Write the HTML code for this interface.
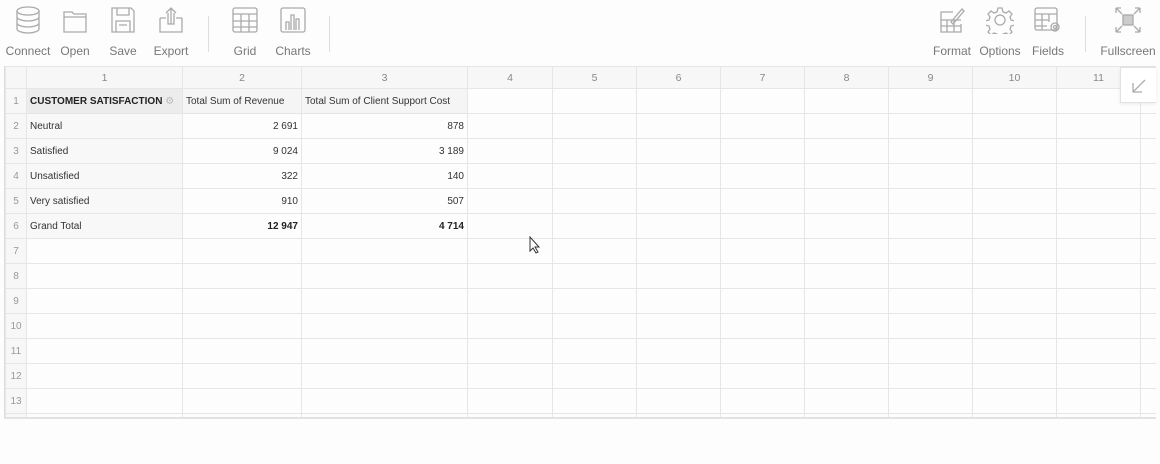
<!DOCTYPE html>
<html><head><meta charset="utf-8"><style>
body{margin:0;width:1160px;height:464px;background:#fdfdfd;font-family:"Liberation Sans",Arial,sans-serif;position:relative;overflow:hidden}
.tb{position:absolute;top:0;text-align:center;font-size:12px;color:#777}
.tb svg{display:block;margin:6px auto 0}
.tb span{position:absolute;top:44px;left:50%;transform:translateX(-50%);white-space:nowrap}
.sep{position:absolute;top:16px;width:1px;height:36px;background:#ddd}
.grid{position:absolute;left:4px;top:66px;width:1152px;height:353px;overflow:hidden;border-left:1px solid #ddd;border-bottom:2px solid #e2e2e2;box-sizing:border-box}
table{border-collapse:collapse;table-layout:fixed;width:1170px;font-size:10px;color:#333}
td{border:1px solid #e6e6e6;height:25px;padding:0 3px;white-space:nowrap;overflow:hidden;box-sizing:border-box}
tr.h td{height:22px;background:#f7f7f7;color:#888;text-align:center;font-size:10.5px}
td.n{background:#f7f7f7;color:#999;text-align:center;padding:0}
td.g{background:#f8f8f8}
td.m{background:#f5f5f5}
td.r{text-align:right}
b{font-weight:bold;color:#222}
.st{stroke:#aaa;fill:none;stroke-width:1.3}
</style></head><body>
<div class="tb" style="left:4px;width:48px"><svg width="26" height="28" viewBox="0 0 26 28" class="st"><ellipse cx="13" cy="5" rx="11" ry="4"/><path d="M2 5v18c0 2 5 4 11 4s11-2 11-4V5M2 11c0 2 5 4 11 4s11-2 11-4M2 17c0 2 5 4 11 4s11-2 11-4"/></svg><span>Connect</span></div>
<div class="tb" style="left:58px;width:34px"><svg width="26" height="28" viewBox="0 0 26 28" class="st"><path d="M2 6h8l2 2h12v18H2z M2 11h22"/></svg><span>Open</span></div>
<div class="tb" style="left:106px;width:34px"><svg width="26" height="28" viewBox="0 0 26 28" class="st"><path d="M2 2h19l3 3v21H2z M7 2v7h12V2 M6 15h14v11H6z M9 19h8"/></svg><span>Save</span></div>
<div class="tb" style="left:152px;width:38px"><svg width="26" height="28" viewBox="0 0 26 28" class="st"><path d="M2 12h6M18 12h6M2 12v14h22V12M13 2v16M8 7l5-5 5 5M10 7v11h6V7"/></svg><span>Export</span></div>
<div class="sep" style="left:208px"></div>
<div class="tb" style="left:228px;width:34px"><svg width="26" height="28" viewBox="0 0 26 28" class="st"><rect x="1" y="2" width="24" height="24" rx="2"/><path d="M1 8h24M1 15h24M1 21h24M9 8v18M17 8v18"/></svg><span>Grid</span></div>
<div class="tb" style="left:276px;width:34px"><svg width="26" height="28" viewBox="0 0 26 28" class="st"><rect x="1" y="2" width="24" height="24" rx="2"/><path d="M6 24v-8h3v8M11 24V9h3v15M16 24v-11h3v11"/></svg><span>Charts</span></div>
<div class="sep" style="left:329px"></div>
<div class="tb" style="left:934px;width:36px"><svg width="26" height="28" viewBox="0 0 26 28" class="st"><path d="M14 6H2v20h20v-8M2 14h20M2 20h20M8 14v12M15 14v12M12 16l11-13 2 2-11 13z"/></svg><span>Format</span></div>
<div class="tb" style="left:980px;width:40px"><svg width="28" height="28" viewBox="0 0 28 28" class="st"><path d="M12 2h4l1 4 3 1 3-2 3 3-2 3 1 3 4 1v4l-4 1-1 3 2 3-3 3-3-2-3 1-1 4h-4l-1-4-3-1-3 2-3-3 2-3-1-3-4-1v-4l4-1 1-3-2-3 3-3 3 2 3-1z"/><circle cx="14" cy="14" r="5"/></svg><span>Options</span></div>
<div class="tb" style="left:1032px;width:32px"><svg width="28" height="28" viewBox="0 0 28 28" class="st"><rect x="1" y="2" width="22" height="22" rx="2"/><path d="M1 8h22M1 14h14M1 20h12M8 8v16M15 8v8"/><circle cx="21" cy="21" r="4"/><circle cx="21" cy="21" r="1.5"/></svg><span>Fields</span></div>
<div class="sep" style="left:1085px"></div>
<div class="tb" style="left:1100px;width:56px"><svg width="28" height="28" viewBox="0 0 28 28" class="st"><rect x="9" y="9" width="10" height="10" fill="#ccc"/><path d="M2 2l6 6M2 2h5M2 2v5M26 2l-6 6M26 2h-5M26 2v5M2 26l6-6M2 26h5M2 26v-5M26 26l-6-6M26 26h-5M26 26v-5"/></svg><span>Fullscreen</span></div>

<div class="grid"><table>
<colgroup><col style="width:21px"><col style="width:156px"><col style="width:119px"><col style="width:166px"><col style="width:85px"><col style="width:84px"><col style="width:84px"><col style="width:84px"><col style="width:84px"><col style="width:84px"><col style="width:84px"><col style="width:84px"><col style="width:35px"></colgroup>
<tr class="h"><td></td><td>1</td><td>2</td><td>3</td><td>4</td><td>5</td><td>6</td><td>7</td><td>8</td><td>9</td><td>10</td><td>11</td><td></td></tr>
<tr><td class="n">1</td><td style="background:#ececec"><b>CUSTOMER SATISFACTION</b> <span style="color:#bbb">⚙</span></td><td class="m">Total Sum of Revenue</td><td class="m">Total Sum of Client Support Cost</td><td></td><td></td><td></td><td></td><td></td><td></td><td></td><td></td><td></td></tr>
<tr><td class="n">2</td><td class="g">Neutral</td><td class="r">2 691</td><td class="r">878</td><td></td><td></td><td></td><td></td><td></td><td></td><td></td><td></td><td></td></tr>
<tr><td class="n">3</td><td class="g">Satisfied</td><td class="r">9 024</td><td class="r">3 189</td><td></td><td></td><td></td><td></td><td></td><td></td><td></td><td></td><td></td></tr>
<tr><td class="n">4</td><td class="g">Unsatisfied</td><td class="r">322</td><td class="r">140</td><td></td><td></td><td></td><td></td><td></td><td></td><td></td><td></td><td></td></tr>
<tr><td class="n">5</td><td class="g">Very satisfied</td><td class="r">910</td><td class="r">507</td><td></td><td></td><td></td><td></td><td></td><td></td><td></td><td></td><td></td></tr>
<tr><td class="n">6</td><td class="g">Grand Total</td><td class="r"><b>12 947</b></td><td class="r"><b>4 714</b></td><td></td><td></td><td></td><td></td><td></td><td></td><td></td><td></td><td></td></tr>
<tr><td class="n">7</td><td></td><td></td><td></td><td></td><td></td><td></td><td></td><td></td><td></td><td></td><td></td><td></td></tr>
<tr><td class="n">8</td><td></td><td></td><td></td><td></td><td></td><td></td><td></td><td></td><td></td><td></td><td></td><td></td></tr>
<tr><td class="n">9</td><td></td><td></td><td></td><td></td><td></td><td></td><td></td><td></td><td></td><td></td><td></td><td></td></tr>
<tr><td class="n">10</td><td></td><td></td><td></td><td></td><td></td><td></td><td></td><td></td><td></td><td></td><td></td><td></td></tr>
<tr><td class="n">11</td><td></td><td></td><td></td><td></td><td></td><td></td><td></td><td></td><td></td><td></td><td></td><td></td></tr>
<tr><td class="n">12</td><td></td><td></td><td></td><td></td><td></td><td></td><td></td><td></td><td></td><td></td><td></td><td></td></tr>
<tr><td class="n">13</td><td></td><td></td><td></td><td></td><td></td><td></td><td></td><td></td><td></td><td></td><td></td><td></td></tr>
<tr><td class="n">14</td><td></td><td></td><td></td><td></td><td></td><td></td><td></td><td></td><td></td><td></td><td></td><td></td></tr>
</table></div>
<div style="position:absolute;left:1120px;top:67px;width:36px;height:36px;background:#fff;border:1px solid #e2e2e2;border-right:none;box-sizing:border-box;box-shadow:0 1px 3px rgba(0,0,0,.08)"><svg width="36" height="36" viewBox="0 0 36 36" class="st"><path d="M24 12L12 24M12 15v9h9"/></svg></div>
<svg style="position:absolute;left:529px;top:236px" width="12" height="18" viewBox="0 0 12 18"><path d="M1 1v14l3-3 3 5 2-1-3-5h4z" fill="#fff" stroke="#333" stroke-width="1"/></svg>
</body></html>
